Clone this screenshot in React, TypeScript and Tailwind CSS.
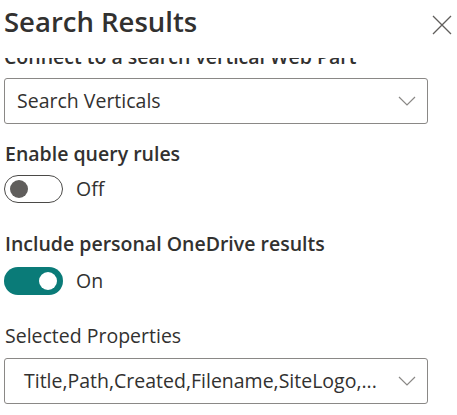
import React from 'react';

const font = { fontFamily: '"Open Sans", "Noto Sans", sans-serif' };

function Chevron() {
  return (
    <svg width="18" height="10" viewBox="0 0 18 10" fill="none" className="shrink-0">
      <path d="M1 1l8 8 8-8" stroke="#8a8886" strokeWidth="1.2" />
    </svg>
  );
}

function Dropdown({ value, pad }: { value: string; pad: string }) {
  return (
    <div
      className={`flex h-[46px] w-[424px] items-center justify-between rounded-[3px] border border-[#8a8886] bg-white ${pad} pr-[11px]`}
    >
      <span className="whitespace-nowrap text-[19.5px] leading-[28px] text-[#323130]">{value}</span>
      <Chevron />
    </div>
  );
}

function Toggle({ on, label }: { on: boolean; label: string }) {
  return (
    <div className="flex h-[28px] items-center gap-[13px]">
      {on ? (
        <div className="flex h-[28px] w-[59px] items-center justify-end rounded-full bg-[#0a7b78] pr-[6px]">
          <div className="h-[18px] w-[18px] rounded-full bg-white" />
        </div>
      ) : (
        <div className="flex h-[28px] w-[59px] items-center rounded-full border-[1.5px] border-[#4b4a48] pl-[5px]">
          <div className="h-[18px] w-[18px] rounded-full bg-[#605e5c]" />
        </div>
      )}
      <span className="text-[19.5px] leading-[24px] text-[#323130]">{label}</span>
    </div>
  );
}

export default function App() {
  return (
    <div className="flex h-[415px] w-[457px] flex-col overflow-hidden bg-white" style={font}>
      <div className="flex h-[58px] shrink-0 items-start justify-between pl-[4px] pr-[5px] pt-[4px]">
        <h1 className="text-[27.5px] font-semibold leading-[36px] text-[#323130]">Search Results</h1>
        <svg width="20" height="20" viewBox="0 0 20 20" className="mt-[11px]" fill="none">
          <path d="M1 1l18 18M19 1L1 19" stroke="#605e5c" strokeWidth="1.3" />
        </svg>
      </div>
      <div className="flex-1 overflow-hidden px-[4px]">
        <div className="-mt-[13px] flex flex-col">
          <div className="text-[19.5px] font-semibold leading-[24px] text-[#323130]">
            Connect to a search vertical Web Part
          </div>
          <div className="mt-[9px]">
            <Dropdown value="Search Verticals" pad="pl-[12px]" />
          </div>
          <div className="mt-[18px] pl-[1px] text-[19.5px] font-semibold leading-[24px] text-[#323130]">
            Enable query rules
          </div>
          <div className="mt-[9px]">
            <Toggle on={false} label="Off" />
          </div>
          <div className="mt-[29px] pl-[1px] text-[19.5px] font-semibold leading-[24px] text-[#323130]">
            Include personal OneDrive results
          </div>
          <div className="mt-[11px]">
            <Toggle on label="On" />
          </div>
          <div className="mt-[29px] pl-[1px] text-[19.5px] leading-[24px] text-[#323130]">Selected Properties</div>
          <div className="mt-[10px]">
            <Dropdown value="Title,Path,Created,Filename,SiteLogo,..." pad="pl-[19px]" />
          </div>
        </div>
      </div>
    </div>
  );
}
